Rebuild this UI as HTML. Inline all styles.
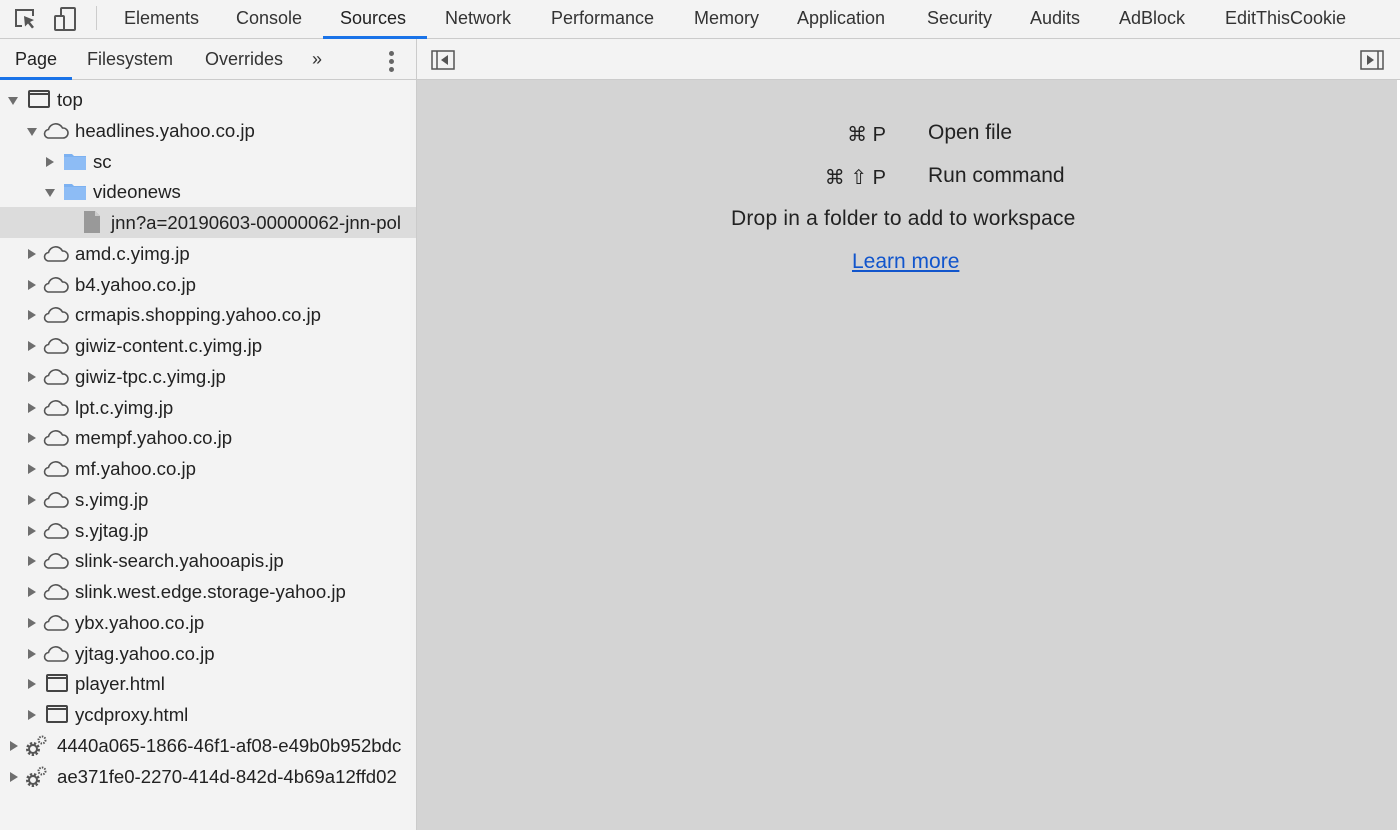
<!DOCTYPE html>
<html><head><meta charset="utf-8"><style>
body{margin:0;width:1400px;height:830px;overflow:hidden;background:#f3f3f3;font-family:"Liberation Sans",sans-serif;color:#222;position:relative}
.a{position:absolute}
.tab{position:absolute;top:0;height:38px;line-height:36px;font-size:18px;color:#333}
.r{position:absolute;left:0;width:416px;height:31px;font-size:18.6px;line-height:31px;color:#222}
.r span{position:absolute;top:0;white-space:nowrap}
.tri{position:absolute;top:11px;width:0;height:0;border-left:8px solid #6e6e6e;border-top:5px solid transparent;border-bottom:5px solid transparent}
.trd{position:absolute;top:13px;width:0;height:0;border-top:8px solid #6e6e6e;border-left:5px solid transparent;border-right:5px solid transparent}
.ic{position:absolute;top:5px}
</style></head><body>
<div class="a" style="left:0;top:0;width:1400px;height:38px;background:#f3f3f3;border-bottom:1px solid #cbcbcb"></div>
<svg class="a" style="left:14px;top:7px" width="24" height="24" viewBox="0 0 24 24"><path d="M8 19H2V3h17v6" fill="none" stroke="#555" stroke-width="2"/><path d="M10 9l10 4-4 2 4 5-2 1.5-4-5-3 3z" fill="#555"/></svg>
<svg class="a" style="left:53px;top:6px" width="26" height="26" viewBox="0 0 26 26"><rect x="8" y="2" width="14" height="22" rx="1" fill="none" stroke="#555" stroke-width="2"/><rect x="2" y="10" width="9" height="14" rx="1" fill="#f3f3f3" stroke="#555" stroke-width="2"/></svg>
<div class="a" style="left:96px;top:6px;width:1px;height:24px;background:#ccc"></div>
<div class="tab" style="left:124px">Elements</div>
<div class="tab" style="left:236px">Console</div>
<div class="tab" style="left:340px;color:#222">Sources</div>
<div class="a" style="left:323px;top:36px;width:104px;height:3px;background:#1a73e8"></div>
<div class="tab" style="left:445px">Network</div>
<div class="tab" style="left:551px">Performance</div>
<div class="tab" style="left:694px">Memory</div>
<div class="tab" style="left:797px">Application</div>
<div class="tab" style="left:927px">Security</div>
<div class="tab" style="left:1030px">Audits</div>
<div class="tab" style="left:1119px">AdBlock</div>
<div class="tab" style="left:1225px">EditThisCookie</div>
<div class="a" style="left:0;top:39px;width:1400px;height:40px;background:#f3f3f3;border-bottom:1px solid #cbcbcb"></div>
<div class="tab" style="left:15px;top:41px;color:#222">Page</div>
<div class="a" style="left:0;top:77px;width:72px;height:3px;background:#1a73e8"></div>
<div class="tab" style="left:87px;top:41px">Filesystem</div>
<div class="tab" style="left:205px;top:41px">Overrides</div>
<div class="tab" style="left:312px;top:41px">»</div>
<div class="a" style="left:389px;top:51px;width:5px;height:5px;border-radius:50%;background:#666;box-shadow:0 8px 0 #666,0 16px 0 #666"></div>
<div class="a" style="left:416px;top:39px;width:1px;height:791px;background:#cbcbcb"></div>
<svg class="a" style="left:431px;top:50px" width="24" height="20"><rect x="1" y="1" width="22" height="18" fill="none" stroke="#555" stroke-width="1.5"/><line x1="6" y1="1" x2="6" y2="19" stroke="#555" stroke-width="1.5"/><path d="M17 5v10l-7-5z" fill="#555"/></svg>
<svg class="a" style="left:1360px;top:50px" width="24" height="20"><rect x="1" y="1" width="22" height="18" fill="none" stroke="#555" stroke-width="1.5"/><line x1="18" y1="1" x2="18" y2="19" stroke="#555" stroke-width="1.5"/><path d="M7 5v10l7-5z" fill="#555"/></svg>
<div class="a" style="left:417px;top:80px;width:980px;height:750px;background:#d4d4d4"></div>
<div class="a" style="left:1397px;top:80px;width:3px;height:750px;background:#fff"></div>
<div class="a" style="left:800px;top:122px;width:86px;text-align:right;font-size:20px;color:#222">⌘ P</div>
<div class="a" style="left:780px;top:165px;width:106px;text-align:right;font-size:20px;color:#222">⌘ ⇧ P</div>
<div class="a" style="left:928px;top:121px;font-size:21px;color:#222">Open file</div>
<div class="a" style="left:928px;top:164px;font-size:21px;color:#222">Run command</div>
<div class="a" style="left:731px;top:207px;font-size:21px;color:#222;letter-spacing:0.2px">Drop in a folder to add to workspace</div>
<div class="a" style="left:852px;top:250px;font-size:21px;color:#1155cc;text-decoration:underline">Learn more</div>
<div class="a" style="left:0;top:207px;width:416px;height:31px;background:#dcdcdc"></div>
<div id="t"></div>
<script>
var cloud='<svg class="ic" width="28" height="20" viewBox="0 0 28 20"><path d="M7 18h15a5 5 0 0 0 0-10h-.5A7.5 7.5 0 0 0 7.5 9.5 4.3 4.3 0 0 0 7 18z" fill="none" stroke="#555" stroke-width="1.6"/></svg>';
var win='<svg class="ic" width="22" height="20" viewBox="0 0 22 20"><rect x="1" y="2" width="20" height="16" rx="1" fill="none" stroke="#444" stroke-width="2"/><line x1="1" y1="5" x2="21" y2="5" stroke="#444" stroke-width="2"/></svg>';
var fold='<svg class="ic" width="24" height="20" viewBox="0 0 24 20"><path d="M1 3h8l2 2h12v14H1z" fill="#7cb1f1"/><path d="M1 6h22v13H1z" fill="#8dbcf5"/></svg>';
var file='<svg class="ic" width="18" height="22" viewBox="0 0 18 22" style="top:4px"><path d="M1 0h11l5 5v17H1z" fill="#999"/><path d="M12 0v5h5z" fill="#ccc"/></svg>';
var gear='<svg class="ic" width="24" height="24" viewBox="0 0 24 24" style="top:4px"><circle cx="9" cy="15" r="5.5" fill="none" stroke="#555" stroke-width="3" stroke-dasharray="2.2 1.6"/><circle cx="9" cy="15" r="4" fill="none" stroke="#555" stroke-width="2"/><circle cx="18" cy="6" r="3.5" fill="none" stroke="#555" stroke-width="2" stroke-dasharray="1.5 1.2"/></svg>';
var rows=[
[0,'d',win,'top'],[1,'d',cloud,'headlines.yahoo.co.jp'],[2,'r',fold,'sc'],[2,'d',fold,'videonews'],[3,'',file,'jnn?a=20190603-00000062-jnn-pol'],
[1,'r',cloud,'amd.c.yimg.jp'],[1,'r',cloud,'b4.yahoo.co.jp'],[1,'r',cloud,'crmapis.shopping.yahoo.co.jp'],[1,'r',cloud,'giwiz-content.c.yimg.jp'],[1,'r',cloud,'giwiz-tpc.c.yimg.jp'],[1,'r',cloud,'lpt.c.yimg.jp'],[1,'r',cloud,'mempf.yahoo.co.jp'],[1,'r',cloud,'mf.yahoo.co.jp'],[1,'r',cloud,'s.yimg.jp'],[1,'r',cloud,'s.yjtag.jp'],[1,'r',cloud,'slink-search.yahooapis.jp'],[1,'r',cloud,'slink.west.edge.storage-yahoo.jp'],[1,'r',cloud,'ybx.yahoo.co.jp'],[1,'r',cloud,'yjtag.yahoo.co.jp'],
[1,'r',win,'player.html'],[1,'r',win,'ycdproxy.html'],[0,'r',gear,'4440a065-1866-46f1-af08-e49b0b952bdc'],[0,'r',gear,'ae371fe0-2270-414d-842d-4b69a12ffd02']];
var h='';
rows.forEach(function(r,i){
 var top=84+i*30.75,lv=r[0],ax=8+lv*18.5,ix,tx;
 if(lv==0){ix=r[2]==gear?24:28;tx=57}
 else if(lv==1){ix=r[2]==cloud?41:46;tx=75}
 else if(lv==2){ix=63;tx=93}
 else{ix=83;tx=111}
 if(lv==1&&r[1]!='d')ax=27;
 if(lv==0&&r[1]=='r')ax=9;
 var arrow=r[1]=='d'?'<i class="trd" style="left:'+ax+'px"></i>':r[1]=='r'?'<i class="tri" style="left:'+(ax+1)+'px"></i>':'';
 h+='<div class="r" style="top:'+top+'px">'+arrow+'<span style="left:'+ix+'px">'+r[2]+'</span><span style="left:'+tx+'px">'+r[3]+'</span></div>';
});
document.getElementById('t').innerHTML=h;
</script>
</body></html>
